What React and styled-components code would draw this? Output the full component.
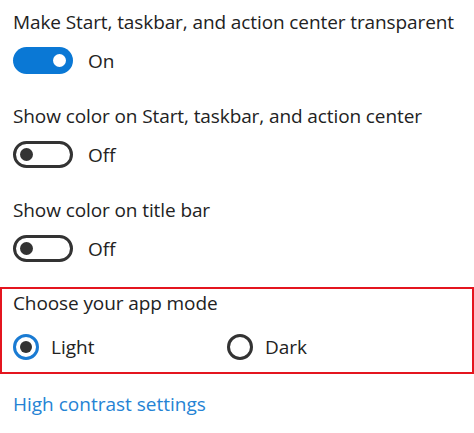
import React from 'react';
import styled, { createGlobalStyle } from 'styled-components';

const GlobalStyle = createGlobalStyle`
  body {
    margin: 0;
    background: #fff;
    font-family: 'Open Sans', 'Noto Sans', sans-serif;
    color: #222;
  }
`;

const Page = styled.div`
  width: 474px;
  height: 433px;
  overflow: hidden;
  padding-top: 10px;
  box-sizing: border-box;
`;

const Setting = styled.div`
  padding: 0 13px;
  margin-bottom: ${({ gap }) => gap || 0}px;
`;

const Label = styled.div`
  font-size: 19px;
  line-height: 24px;
  letter-spacing: -0.1px;
  margin-bottom: 13px;
`;

const ToggleRow = styled.div`
  display: flex;
  align-items: center;
  gap: 15px;
`;

const Track = styled.div`
  width: 60px;
  height: 27px;
  box-sizing: border-box;
  border-radius: 14px;
  display: flex;
  align-items: center;
  justify-content: ${({ on }) => (on ? 'flex-end' : 'flex-start')};
  background: ${({ on }) => (on ? '#0a78d5' : '#fff')};
  border: ${({ on }) => (on ? 'none' : '3px solid #333')};
  padding: ${({ on }) => (on ? '0 7px' : '0 4px')};
`;

const Knob = styled.div`
  width: 13px;
  height: 13px;
  border-radius: 50%;
  background: ${({ on }) => (on ? '#fff' : '#333')};
`;

const StateText = styled.span`
  font-size: 19px;
  line-height: 24px;
`;

const ModeBox = styled.div`
  border: 2px solid #e4151f;
  height: 87px;
  box-sizing: border-box;
  padding: 2px 11px 0;
  margin-bottom: 18px;
`;

const RadioGroup = styled.div`
  display: flex;
  margin-top: 19px;
`;

const RadioOption = styled.div`
  display: flex;
  align-items: center;
  gap: 12px;
  width: 214px;
`;

const RadioCircle = styled.div`
  width: 26px;
  height: 26px;
  box-sizing: border-box;
  border-radius: 50%;
  border: 3px solid ${({ checked }) => (checked ? '#1a7bd3' : '#333')};
  display: flex;
  align-items: center;
  justify-content: center;
`;

const RadioDot = styled.div`
  width: 12px;
  height: 12px;
  border-radius: 50%;
  background: #333;
`;

const Link = styled.a`
  display: block;
  padding: 0 13px;
  font-size: 19px;
  line-height: 24px;
  color: #2583d4;
  text-decoration: none;
`;

function Toggle({ label, on, gap }) {
  return (
    <Setting gap={gap}>
      <Label>{label}</Label>
      <ToggleRow>
        <Track on={on ? 1 : 0}>
          <Knob on={on ? 1 : 0} />
        </Track>
        <StateText>{on ? 'On' : 'Off'}</StateText>
      </ToggleRow>
    </Setting>
  );
}

function Radio({ label, checked }) {
  return (
    <RadioOption>
      <RadioCircle checked={checked}>{checked && <RadioDot />}</RadioCircle>
      <StateText>{label}</StateText>
    </RadioOption>
  );
}

export default function App() {
  return (
    <>
      <GlobalStyle />
      <Page>
        <Toggle label="Make Start, taskbar, and action center transparent" on gap={30} />
        <Toggle label="Show color on Start, taskbar, and action center" gap={30} />
        <Toggle label="Show color on title bar" gap={25} />
        <ModeBox>
          <Label>Choose your app mode</Label>
          <RadioGroup>
            <Radio label="Light" checked />
            <Radio label="Dark" />
          </RadioGroup>
        </ModeBox>
        <Link href="#">High contrast settings</Link>
      </Page>
    </>
  );
}
